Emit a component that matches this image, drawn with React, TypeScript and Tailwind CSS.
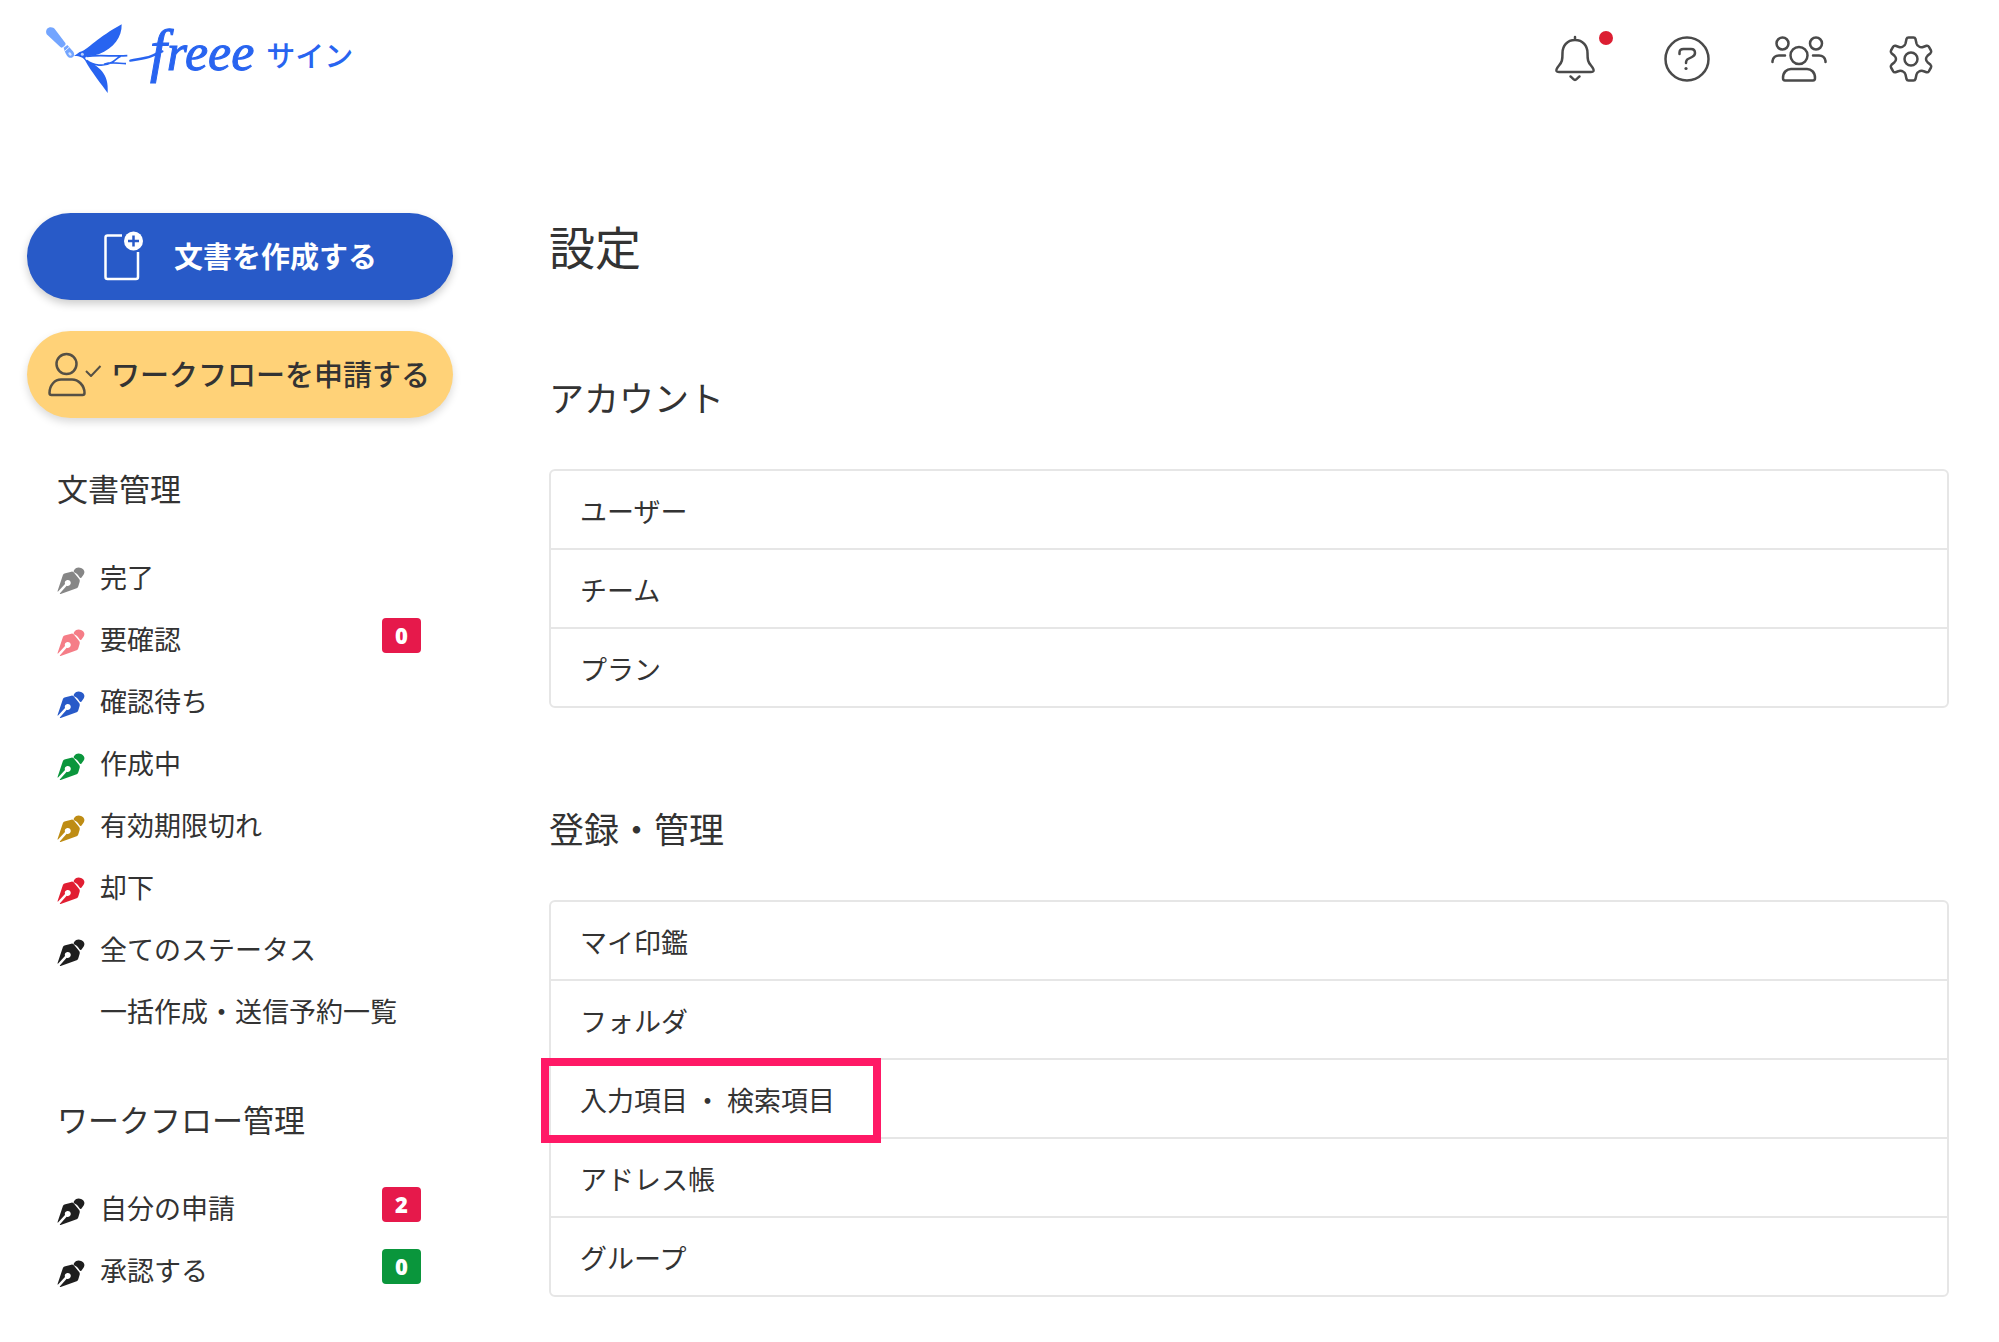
import type { ReactNode } from "react";

function BirdMark() {
  return (
    <svg viewBox="45 30 285 228" className="h-[76px] w-[95px] shrink-0 overflow-visible" aria-hidden="true">
      <path d="M50 70C42 50 66 42 76 56L106 96C110 103 98 115 91 108Z" fill="#73a5ff" />
      <path d="M101 110L112 102L130 122C136 132 130 142 119 140C112 138 106 128 101 110Z" fill="#73a5ff" />
      <path d="M96 112L111 99M104 121L118 108" stroke="#fff" strokeWidth="2.5" />
      <ellipse cx="120" cy="129" rx="4" ry="6" fill="#d4e4ff" transform="rotate(-40 120 129)" />
      <path d="M132 135C140 132 145 123 156 121C170 117 205 78 275 40C276 78 252 112 206 130C190 134 172 136 168 138L172 146C205 168 238 185 233 246C216 222 184 183 165 148C160 139 146 134 132 135Z" fill="#2864f0" />
      <circle cx="157" cy="130" r="4.500" fill="#b9d0ff" />
      <path d="M166 139C200 137 230 134 264 136C252 148 240 158 214 161C192 162 176 154 166 143Z" fill="#fff" />
      <path d="M170 136C210 131 250 137 292 134M170 148C190 164 222 168 246 154C256 148 262 140 272 136M222 160C246 151 266 158 288 158" fill="none" stroke="#2864f0" strokeWidth="5" />
      <path d="M301 149C325 144 346 142 362 136C376 131 385 124 397 121" fill="none" stroke="#2864f0" strokeWidth="7" strokeLinecap="round" />
    </svg>
  );
}

function BellIcon() {
  return (
    <svg viewBox="0 0 56 48" className="h-12 w-14" fill="none" stroke="#4a4a4a" strokeWidth="2.5" strokeLinejoin="round" strokeLinecap="round" aria-hidden="true">
      <path d="M28 2V5M28 5C20 5 15.500 11 15.500 18C15.500 25 15 27 12 30.500C9.500 33.500 9 34.500 9.500 36Q10 37 12 37H44Q46 37 46.500 36C47 34.500 46.500 33.500 44 30.500C41 27 40.500 25 40.500 18C40.500 11 36 5 28 5Z" />
      <path d="M23.500 41.500C25 42 26 45 28 45C30 45 31 42 32.500 41.500" />
    </svg>
  );
}

function HelpIcon() {
  return (
    <svg viewBox="0 0 56 48" className="h-12 w-14" fill="none" stroke="#4a4a4a" strokeWidth="2.5" strokeLinejoin="round" strokeLinecap="round" aria-hidden="true">
      <circle cx="28" cy="24" r="21.500" />
      <path d="M20.500 19V17.500Q20.500 14 24.500 14H32Q36 14 36 18Q36 20.500 33 22L29 24Q27 25 27 28" />
      <circle cx="27" cy="33.500" r="1.600" fill="#4a4a4a" stroke="none" />
    </svg>
  );
}

function PeopleIcon() {
  return (
    <svg viewBox="0 0 56 48" className="h-12 w-14" fill="none" stroke="#4a4a4a" strokeWidth="2.5" strokeLinejoin="round" strokeLinecap="round" aria-hidden="true">
      <circle cx="11.500" cy="8.500" r="6" />
      <circle cx="45" cy="8.500" r="6" />
      <circle cx="28" cy="20.500" r="8.500" />
      <path d="M1.500 27V26Q2.500 20.500 8 20.500H14M54.500 27V26Q53.500 20.500 48 20.500H42" />
      <path d="M12 43C12 37 16 34 20 34H36C40 34 44 37 44 43Q44 45.500 42 45.500H14Q12 45.500 12 43Z" />
    </svg>
  );
}

function GearIcon() {
  return (
    <svg viewBox="0 0 56 48" className="h-12 w-14" fill="none" stroke="#4a4a4a" strokeWidth="2.5" strokeLinejoin="round" aria-hidden="true">
      <circle cx="28" cy="24" r="6.500" />
      <path d="M25.500 2.500H30.500Q32 2.500 32.500 4L33.500 8.500Q34 10.500 36 11.500Q38 12.800 40 12L43.500 10.800Q45 10.400 45.800 11.700L48 15.500Q48.700 17 47.500 18.200L44.500 20.800Q43 22.200 43 24Q43 25.800 44.500 27.200L47.500 29.800Q48.700 31 48 32.500L45.800 36.300Q45 37.600 43.500 37.200L40 36Q38 35.200 36 36.500Q34 37.500 33.500 39.500L32.500 44Q32 45.500 30.500 45.500H25.500Q24 45.500 23.500 44L22.500 39.500Q22 37.500 20 36.500Q18 35.200 16 36L12.500 37.200Q11 37.600 10.200 36.300L8 32.500Q7.300 31 8.500 29.800L11.500 27.200Q13 25.800 13 24Q13 22.200 11.500 20.800L8.500 18.200Q7.300 17 8 15.500L10.200 11.700Q11 10.400 12.500 10.800L16 12Q18 12.800 20 11.500Q22 10.500 22.500 8.500L23.500 4Q24 2.500 25.500 2.500Z" />
    </svg>
  );
}

function NewDocumentIcon() {
  return (
    <svg viewBox="0 0 40 52" className="h-[52px] w-10 shrink-0" fill="none" aria-hidden="true">
      <path d="M18 5.500H3.500Q1.500 5.500 1.500 7.500V47Q1.500 49 3.500 49H32Q34 49 34 47V22" stroke="#fff" strokeWidth="2.500" />
      <circle cx="29.500" cy="11" r="9.500" fill="#fff" />
      <path d="M29.500 5.500V16.500M24 11H35" stroke="#285ac8" strokeWidth="2.500" />
    </svg>
  );
}

function ApplicantIcon() {
  return (
    <svg viewBox="0 0 56 46" className="h-[46px] w-14 shrink-0" fill="none" stroke="#555045" strokeWidth="2.500" strokeLinejoin="round" aria-hidden="true">
      <circle cx="19.500" cy="13" r="10" />
      <path d="M2.500 42C2.500 34 8 28.500 14 28.500H25C31 28.500 37.500 34 37.500 42Q37.500 44 35.500 44H4.500Q2.500 44 2.500 42Z" />
      <path d="M39 20L44 25L53.500 15" strokeWidth="2" />
    </svg>
  );
}

function PenIcon({ color }: { color: string }) {
  return (
    <svg viewBox="0 0 84 84" className="h-7 w-7" aria-hidden="true">
      <path d="M52 8C58 0 66 0 74 4C84 10 84 18 79 24L73 32Q70 34 67 30C64 24 60 20 54 17Q47 14 52 8Z" fill={color} />
      <path d="M18 23Q20 20 25 19L43 14Q47 13 50 16L67 37Q69 40 68 44L64 58Q63 62 59 64L11 81Q7 82 9 79L29 56A9 9 0 1 0 24 51L4 73Q1 76 2 71Z" fill={color} />
    </svg>
  );
}

type NavEntry = { label: string; pen?: string; badge?: { count: number; tone: string } };

const documents: NavEntry[] = [
  { label: "完了", pen: "#868686" },
  { label: "要確認", pen: "#f57d87", badge: { count: 0, tone: "bg-[#e6194b]" } },
  { label: "確認待ち", pen: "#285ac8" },
  { label: "作成中", pen: "#0a963c" },
  { label: "有効期限切れ", pen: "#be8c14" },
  { label: "却下", pen: "#e11e32" },
  { label: "全てのステータス", pen: "#1e1e1e" },
  { label: "一括作成・送信予約一覧" },
];

const workflows: NavEntry[] = [
  { label: "自分の申請", pen: "#1e1e1e", badge: { count: 2, tone: "bg-[#e6194b]" } },
  { label: "承認する", pen: "#1e1e1e", badge: { count: 0, tone: "bg-[#0a963c]" } },
];

function NavSection({ title, entries }: { title: string; entries: NavEntry[] }) {
  return (
    <section className="pr-8 pl-[30px]">
      <h2 className="text-[31px] leading-10">{title}</h2>
      <ul className="mt-[38px]">
        {entries.map(({ label, pen, badge }) => (
          <li key={label}>
            <a href="#" className="flex h-[62px] items-center text-[27px] leading-10">
              <span className="mr-[15px] w-7 shrink-0 pt-2">{pen && <PenIcon color={pen} />}</span>
              <span className="whitespace-nowrap">{label}</span>
              {badge && (
                <span className={`mb-2 ml-auto flex h-[35px] w-[39px] items-center justify-center rounded font-['Open_Sans','Noto_Sans',sans-serif] text-[22px] font-extrabold text-white ${badge.tone}`}>
                  {badge.count}
                </span>
              )}
            </a>
          </li>
        ))}
      </ul>
    </section>
  );
}

function SettingsSection({ title, items, highlighted }: { title: string; items: string[]; highlighted?: string }) {
  return (
    <section>
      <h2 className="text-[35px] leading-[48px]">{title}</h2>
      <ul className="mt-12 divide-y-2 divide-[#e6e6e6] rounded-md border-2 border-[#e6e6e6]">
        {items.map((item) => (
          <li key={item} className="relative">
            <a href="#" className="flex h-[77px] items-center px-[29px] pt-1 text-[27px]">
              {item}
            </a>
            {item === highlighted && (
              <div className="pointer-events-none absolute -top-0.5 -bottom-1.5 -left-2.5 w-[340px] border-8 border-[#ff1966]" />
            )}
          </li>
        ))}
      </ul>
    </section>
  );
}

function HeaderButton({ label, children }: { label: string; children: ReactNode }) {
  return (
    <button type="button" aria-label={label} className="relative">
      {children}
    </button>
  );
}

export default function App() {
  return (
    <div className="min-h-screen bg-white font-['Noto_Sans_CJK_JP',sans-serif] text-[#333]">
      <header className="flex items-center justify-between pt-[21px] pr-[60px] pl-[45px]">
        <a href="#" aria-label="freee サイン" className="flex items-center text-[#2864f0]">
          <BirdMark />
          <span className="flex items-baseline pb-4 pl-2.5 font-['Liberation_Serif',serif] italic [-webkit-text-stroke:1px]">
            <span className="text-[60px] leading-[48px]">f</span>
            <span className="text-[52px] leading-[48px]">reee</span>
          </span>
          <span className="pb-2.5 pl-3 text-[29px] leading-10 font-medium">サイン</span>
        </a>
        <nav className="flex gap-14">
          <HeaderButton label="お知らせ">
            <BellIcon />
            <span className="absolute -top-1 -right-2.5 size-3.5 rounded-full bg-[#dc1e32]" />
          </HeaderButton>
          <HeaderButton label="ヘルプ">
            <HelpIcon />
          </HeaderButton>
          <HeaderButton label="メンバー">
            <PeopleIcon />
          </HeaderButton>
          <HeaderButton label="設定">
            <GearIcon />
          </HeaderButton>
        </nav>
      </header>

      <div className="flex gap-24 pt-[116px] pr-[50px] pb-10 pl-[27px]">
        <aside className="w-[426px] shrink-0">
          <div className="flex flex-col gap-[31px]">
            <button type="button" className="flex h-[87px] items-center rounded-full bg-[#285ac8] pb-0.5 pl-[77px] text-[29px] font-bold text-white shadow-[0_4px_8px_rgba(0,0,0,0.2)]">
              <NewDocumentIcon />
              <span className="pl-[30px]">文書を作成する</span>
            </button>
            <button type="button" className="flex h-[87px] items-center rounded-full bg-[#ffd278] pb-0.5 pl-5 text-[29px] font-medium shadow-[0_4px_8px_rgba(0,0,0,0.15)]">
              <ApplicantIcon />
              <span className="pl-2 whitespace-nowrap">ワークフローを申請する</span>
            </button>
          </div>
          <nav className="flex flex-col gap-[57px] pt-[50px]">
            <NavSection title="文書管理" entries={documents} />
            <NavSection title="ワークフロー管理" entries={workflows} />
          </nav>
        </aside>

        <main className="min-w-0 flex-1">
          <h1 className="text-[46px] leading-[64px]">設定</h1>
          <div className="flex flex-col gap-24 pt-24">
            <SettingsSection title="アカウント" items={["ユーザー", "チーム", "プラン"]} />
            <SettingsSection
              title="登録・管理"
              items={["マイ印鑑", "フォルダ", "入力項目 ・ 検索項目", "アドレス帳", "グループ"]}
              highlighted="入力項目 ・ 検索項目"
            />
          </div>
        </main>
      </div>
    </div>
  );
}
